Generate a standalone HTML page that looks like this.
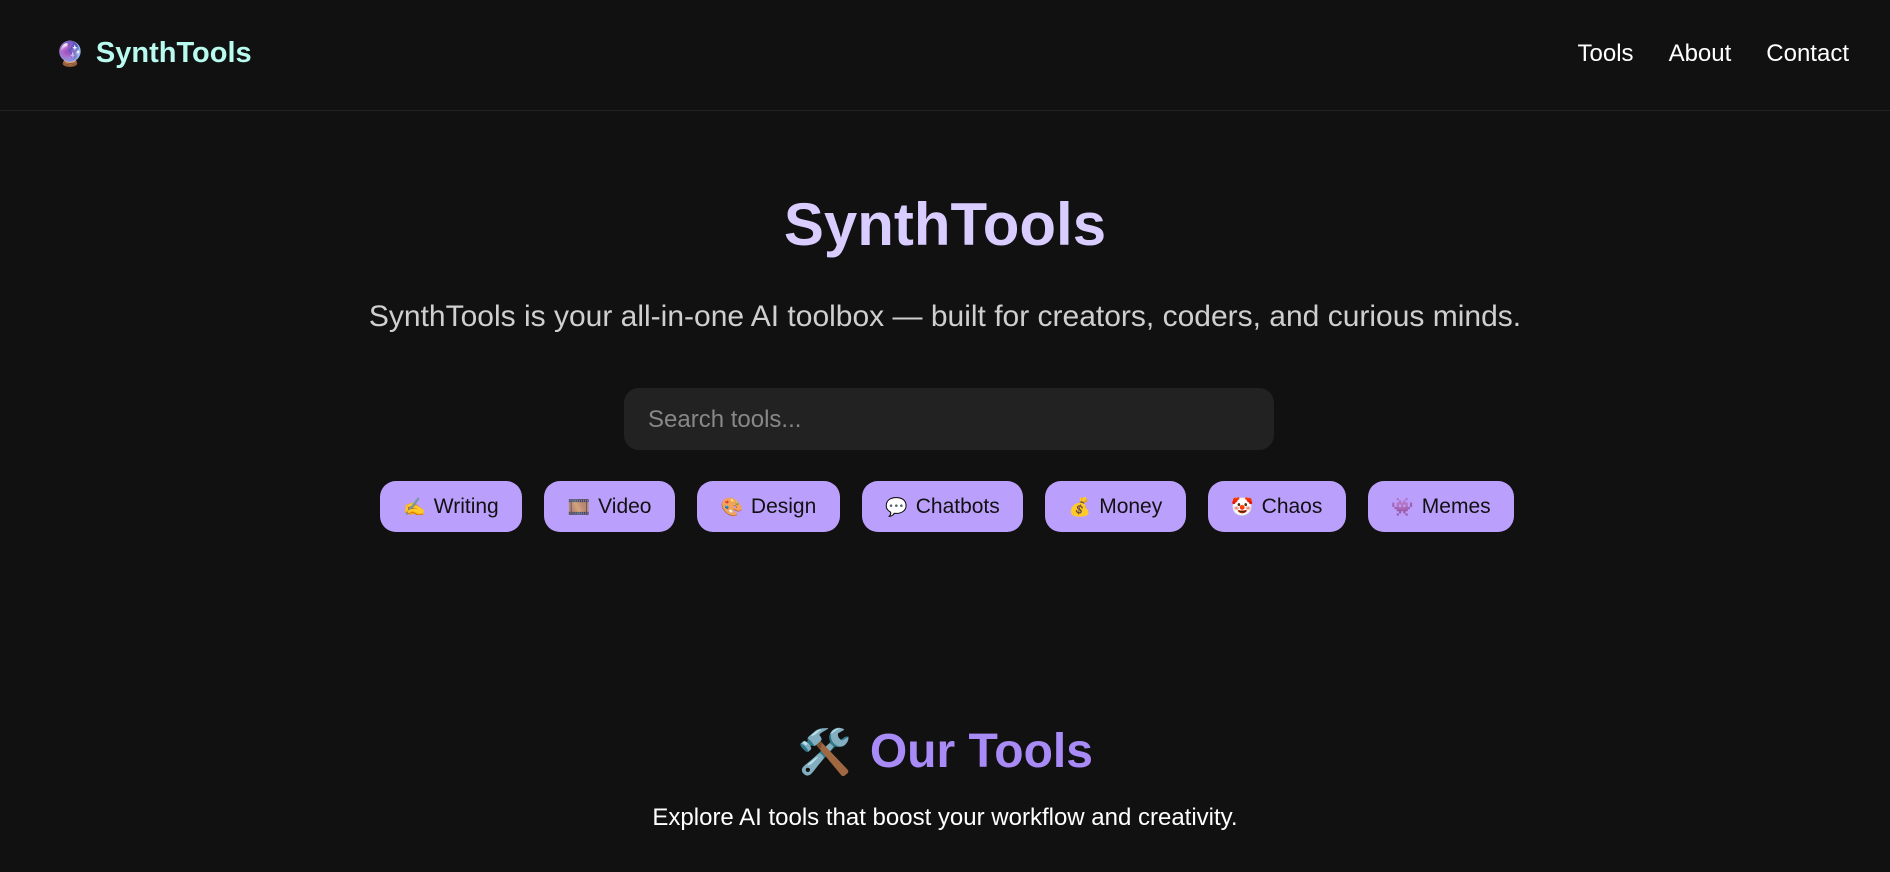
<!DOCTYPE html>
<html><head><meta charset="utf-8"><style>
*{margin:0;padding:0;box-sizing:border-box}
html,body{width:1890px;height:872px;background:#111;overflow:hidden;font-family:"Liberation Sans",Arial,sans-serif}
header{height:111px;border-bottom:1px solid #222;position:relative}
.logo{position:absolute;left:55px;top:37px;font-size:29px;font-weight:bold;color:#b9fbef;white-space:nowrap}
.logo span{font-size:24px;margin-right:11px}
nav{position:absolute;right:41px;top:40px;font-size:24px;color:#fff}
nav a{margin-left:35px;color:#fff;text-decoration:none}
h1{position:absolute;top:190px;width:100%;text-align:center;font-size:60px;color:#d9ccff;font-weight:bold}
.sub{position:absolute;top:300px;width:100%;text-align:center;font-size:30px;color:#cfcfcf}
.search{position:absolute;left:624px;top:388px;width:650px;height:62px;background:#222;border-radius:15px;color:#888;font-size:24px;padding:18px 24px}
.pills{position:absolute;top:481px;left:2px;width:1890px;display:flex;justify-content:center;gap:22px}
.pill{height:51px;line-height:51px;padding:0 23.5px;background:#bb9ffc;border-radius:16px;font-size:21px;color:#111;white-space:nowrap}
.pill i{font-style:normal;font-size:18px;margin-right:8px}
h2{position:absolute;top:724px;width:100%;text-align:center;font-size:48px;color:#a88bf7;font-weight:bold}
h2 span{font-size:44px;margin-right:18px}
.ex{position:absolute;top:804px;width:100%;text-align:center;font-size:24px;color:#fff}
</style></head><body>
<header>
<div class="logo"><span>🔮</span>SynthTools</div>
<nav><a>Tools</a><a>About</a><a>Contact</a></nav>
</header>
<h1>SynthTools</h1>
<div class="sub">SynthTools is your all-in-one AI toolbox — built for creators, coders, and curious minds.</div>
<div class="search">Search tools...</div>
<div class="pills">
<div class="pill"><i>✍️</i>Writing</div>
<div class="pill"><i>🎞️</i>Video</div>
<div class="pill"><i>🎨</i>Design</div>
<div class="pill"><i>💬</i>Chatbots</div>
<div class="pill"><i>💰</i>Money</div>
<div class="pill"><i>🤡</i>Chaos</div>
<div class="pill"><i>👾</i>Memes</div>
</div>
<h2><span>🛠️</span>Our Tools</h2>
<div class="ex">Explore AI tools that boost your workflow and creativity.</div>
</body></html>
